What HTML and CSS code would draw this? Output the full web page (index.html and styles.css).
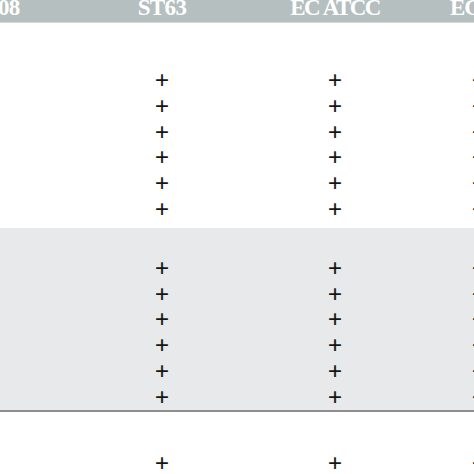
FILE: index.html
```html
<!DOCTYPE html>
<html>
<head>
<meta charset="utf-8">
<link rel="stylesheet" href="styles.css">
</head>
<body>
<div class="table">
  <div class="head">
    <div class="h h0">08</div>
    <div class="h h1">ST63</div>
    <div class="h"><span class="tight">EC ATCC</span></div>
    <div class="h h3">EC</div>
  </div>
  <div class="group g1">
    <div class="label"></div>
    <div class="row"><div class="c"></div><div class="c">+</div><div class="c">+</div><div class="c">+</div></div>
    <div class="row"><div class="c"></div><div class="c">+</div><div class="c">+</div><div class="c">+</div></div>
    <div class="row"><div class="c"></div><div class="c">+</div><div class="c">+</div><div class="c">+</div></div>
    <div class="row"><div class="c"></div><div class="c">+</div><div class="c">+</div><div class="c">+</div></div>
    <div class="row"><div class="c"></div><div class="c">+</div><div class="c">+</div><div class="c">+</div></div>
    <div class="row"><div class="c"></div><div class="c">+</div><div class="c">+</div><div class="c">+</div></div>
  </div>
  <div class="group g2">
    <div class="label"></div>
    <div class="row"><div class="c"></div><div class="c">+</div><div class="c">+</div><div class="c">+</div></div>
    <div class="row"><div class="c"></div><div class="c">+</div><div class="c">+</div><div class="c">+</div></div>
    <div class="row"><div class="c"></div><div class="c">+</div><div class="c">+</div><div class="c">+</div></div>
    <div class="row"><div class="c"></div><div class="c">+</div><div class="c">+</div><div class="c">+</div></div>
    <div class="row"><div class="c"></div><div class="c">+</div><div class="c">+</div><div class="c">+</div></div>
    <div class="row"><div class="c"></div><div class="c">+</div><div class="c">+</div><div class="c">+</div></div>
  </div>
  <div class="group g3">
    <div class="label"></div>
    <div class="row"><div class="c"></div><div class="c">+</div><div class="c">+</div><div class="c">+</div></div>
  </div>
</div>
</body>
</html>
```
FILE: styles.css
```css
html, body {
  margin: 0;
  padding: 0;
  background: #ffffff;
  overflow: hidden;
  width: 474px;
  height: 474px;
}
.table {
  width: 536px;
}
.head, .row {
  display: grid;
  grid-template-columns: 76px 172px 174px 114px;
}
.head {
  height: 23px;
  background: #b5bfbf;
  border-bottom: 1px solid #d4dada;
  box-sizing: border-box;
  overflow: hidden;
}
.h {
  font-family: "Liberation Serif", "Times New Roman", serif;
  font-weight: bold;
  font-size: 23px;
  line-height: 22px;
  margin-top: -3px;
  color: #ffffff;
  text-align: center;
  white-space: nowrap;
}
.h0 {
  text-align: left;
  margin-left: -2px;
  letter-spacing: -0.8px;
}
.h1 {
  letter-spacing: -0.6px;
}
.h3 {
  text-align: left;
  padding-left: 28px;
  letter-spacing: -1.2px;
}
.tight {
  letter-spacing: -1.6px;
  word-spacing: 1px;
}
.row {
  height: 25.8px;
}
.c {
  font-family: "Liberation Sans", Arial, sans-serif;
  font-size: 24px;
  line-height: 25.8px;
  color: #151515;
  text-align: center;
  -webkit-text-stroke: 0.1px #151515;
}
.g1 .label {
  height: 44px;
}
.g1 {
  padding-bottom: 6px;
}
.g2 {
  background: #e7e9ea;
}
.g2 .row {
  height: 25.8px;
}
.g2 .c {
  line-height: 26px;
}
.g2 .label {
  height: 27px;
}
.g3 {
  border-top: 2px solid #8e8e8e;
}
.g3 .label {
  height: 38.5px;
}
```
